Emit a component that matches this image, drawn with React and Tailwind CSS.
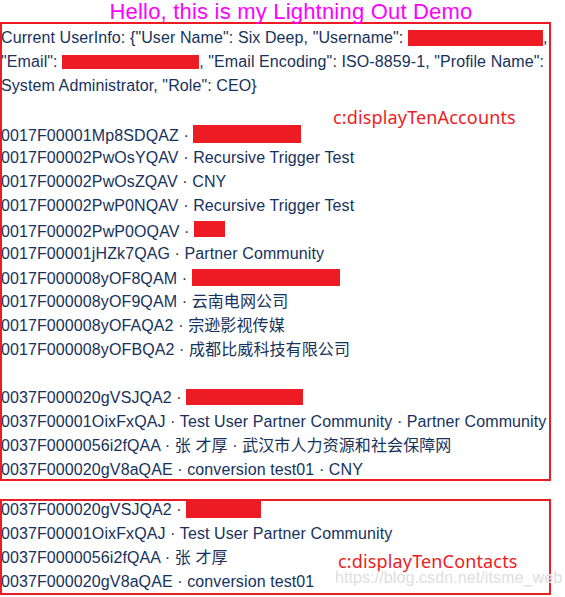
const red = 'bg-[#ed1c24]';

function Redact({ w, h, a }) {
  return <span className={`inline-block ${red}`} style={{ width: w, height: h, verticalAlign: a }} />;
}

function Row({ children }) {
  return <div className="h-[18px] -ml-px whitespace-nowrap">{children}</div>;
}

const accounts = [
  ['0017F00001Mp8SDQAZ', <Redact w={108} h={18} a={-2} />],
  ['0017F00002PwOsYQAV', 'Recursive Trigger Test'],
  ['0017F00002PwOsZQAV', 'CNY'],
  ['0017F00002PwP0NQAV', 'Recursive Trigger Test'],
  ['0017F00002PwP0OQAV', <Redact w={31} h={16} a={0} />],
  ['0017F00001jHZk7QAG', 'Partner Community'],
  ['0017F000008yOF8QAM', <Redact w={148} h={17} a={-2} />],
  ['0017F000008yOF9QAM', '云南电网公司'],
  ['0017F000008yOFAQA2', '宗逊影视传媒'],
  ['0017F000008yOFBQA2', '成都比威科技有限公司'],
];

const contacts = [
  ['0037F000020gVSJQA2', <Redact w={117} h={16} a={-2} />],
  ['0037F00001OixFxQAJ', 'Test User Partner Community · Partner Community'],
  ['0037F0000056i2fQAA', '张 才厚 · 武汉市人力资源和社会保障网'],
  ['0037F000020gV8aQAE', 'conversion test01 · CNY'],
];

const contacts2 = [
  ['0037F000020gVSJQA2', <Redact w={75} h={17} a={-3} />],
  ['0037F00001OixFxQAJ', 'Test User Partner Community'],
  ['0037F0000056i2fQAA', '张 才厚'],
  ['0037F000020gV8aQAE', 'conversion test01'],
];

function List({ items }) {
  return items.map(([id, name]) => (
    <Row key={id}>
      {id} · {name}
    </Row>
  ));
}

export default function App() {
  return (
    <div
      className="relative w-[565px] h-[597px] overflow-hidden bg-white text-[16px] tracking-[0.1px] text-[#16325c]"
      style={{ fontFamily: '"Liberation Sans", Arial, "Noto Sans CJK SC", sans-serif' }}
    >
      {/* Title */}
      <div className="h-[22px] pl-[17px] text-center text-[22px] leading-[24px] tracking-[0.2px] text-[#ff00ff] whitespace-nowrap">
        Hello, this is my Lightning Out Demo
      </div>

      {/* Box 1: user info, accounts, contacts */}
      <div className="w-[551px] h-[459px] border-2 border-[#ed1c24] pt-[5px] flex flex-col gap-[6px] leading-[18px]">
        <Row>
          Current UserInfo: {'{'}"User Name": Six Deep, "Username": <Redact w={135} h={16} a={-3} />,
        </Row>
        <Row>
          "Email": <Redact w={137} h={14} a={-2} />, "Email Encoding": ISO-8859-1, "Profile Name":
        </Row>
        <Row>System Administrator, "Role": CEO{'}'}</Row>
        <Row />
        <List items={accounts} />
        <Row />
        <List items={contacts} />
      </div>

      {/* Box 2: contacts */}
      <div className="mt-[18px] w-[551px] h-[96px] border-2 border-[#ed1c24] flex flex-col gap-[6px] leading-[18px]">
        <List items={contacts2} />
      </div>

      {/* annotations */}
      <div
        className="absolute left-[333px] top-[108px] text-[18px] leading-[18px] tracking-[0.15px] text-[#ed1c24] whitespace-nowrap"
        style={{ fontFamily: '"Noto Sans", sans-serif' }}
      >
        c:displayTenAccounts
      </div>
      <div
        className="absolute left-[338px] top-[552px] text-[18px] leading-[18px] tracking-[0.15px] text-[#ed1c24] whitespace-nowrap"
        style={{ fontFamily: '"Noto Sans", sans-serif' }}
      >
        c:displayTenContacts
      </div>
      <div className="absolute left-[335px] top-[570px] text-[16px] leading-[16px] text-[#dedede] whitespace-nowrap [text-shadow:0_0_1px_#ffffff]">
        https://blog.csdn.net/itsme_web
      </div>
    </div>
  );
}
